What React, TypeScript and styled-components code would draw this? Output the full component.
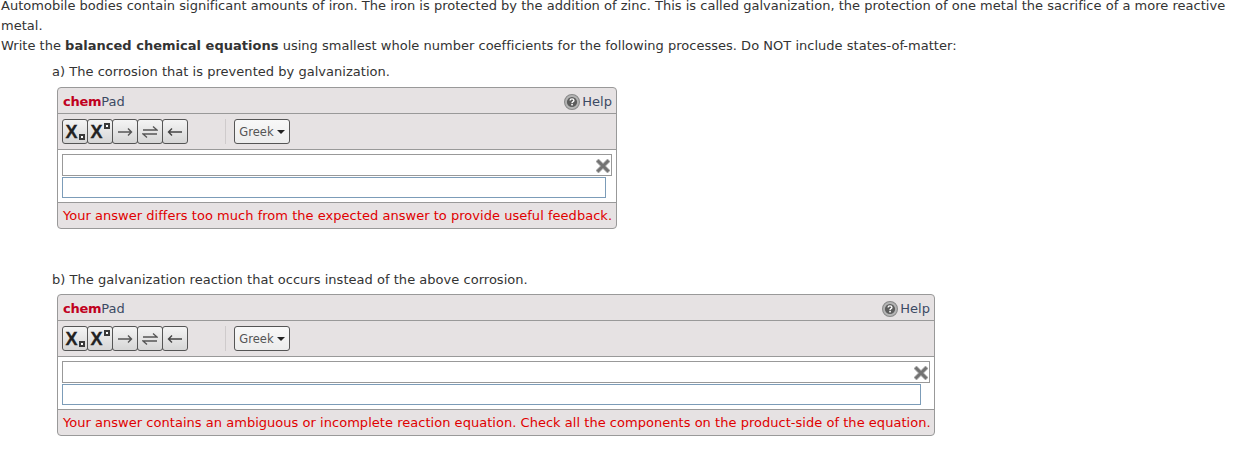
import React from 'react';
import styled, { createGlobalStyle } from 'styled-components';

const GlobalStyle = createGlobalStyle`
  html, body {
    margin: 0;
    padding: 0;
    background: #ffffff;
  }
  body {
    font-family: "DejaVu Sans", Verdana, sans-serif;
    font-size: 13px;
    letter-spacing: 0.03px;
    color: #333333;
    overflow: hidden;
  }
`;

const Page = styled.div`
  margin-top: -4px;
  padding-left: 1px;
  width: 1232px;
`;

const Intro = styled.div`
  line-height: 20px;
  width: 1231px;
  letter-spacing: 0.018px;
`;

const Part = styled.div<{ $gap: number }>`
  margin-left: 56px;
  margin-bottom: ${(p) => p.$gap}px;
`;

const Prompt = styled.div<{ $after: number }>`
  line-height: 20px;
  margin: 6px 0 ${(p) => p.$after}px -5px;
`;

const Panel = styled.div<{ $width: number }>`
  width: ${(p) => p.$width}px;
  border: 1px solid #999999;
  border-radius: 4px;
  background: #e6e2e3;
  box-sizing: border-box;
  overflow: hidden;
`;

const TitleBar = styled.div`
  height: 23px;
  display: flex;
  align-items: center;
  justify-content: space-between;
  padding: 2px 4px 0 5px;
  border-bottom: 1px solid #999999;
`;

const Logo = styled.div`
  font-size: 13px;
  color: #3c4a63;
  b {
    color: #c00020;
    letter-spacing: -0.25px;
  }
`;

const HelpLink = styled.div`
  display: flex;
  align-items: center;
  gap: 2px;
  color: #3c4a63;
`;

const Toolbar = styled.div`
  height: 35px;
  display: flex;
  align-items: center;
  padding: 0 0 0 4px;
  border-bottom: 1px solid #999999;
`;

const ToolGroup = styled.div`
  display: flex;
`;

const ToolButton = styled.div`
  width: 26px;
  height: 25px;
  margin-right: -1px;
  box-sizing: border-box;
  border: 1px solid #555555;
  border-radius: 3px;
  background: linear-gradient(#f4f4f4, #d6d6d6);
  display: flex;
  align-items: center;
  justify-content: center;
`;

const ScriptLetter = styled.span`
  font-family: "Liberation Sans", Arial, sans-serif;
  font-weight: 700;
  font-size: 18px;
  line-height: 1;
  letter-spacing: 0;
  color: #222222;
  -webkit-text-stroke: 0.3px #222222;
`;

const ScriptSlot = styled.span<{ $raised?: boolean }>`
  width: 6px;
  height: 6px;
  box-sizing: border-box;
  margin-left: 1px;
  border: 2px solid #3a3a3a;
  background: #ffffff;
  align-self: ${(p) => (p.$raised ? 'flex-start' : 'flex-end')};
  margin-top: ${(p) => (p.$raised ? 3 : 0)}px;
  margin-bottom: ${(p) => (p.$raised ? 0 : 3)}px;
`;

const Separator = styled.div`
  width: 1px;
  height: 25px;
  background: #cfcbcc;
  margin: 0 8px 0 38px;
`;

const GreekButton = styled.div`
  width: 56px;
  height: 25px;
  box-sizing: border-box;
  border: 1px solid #555555;
  border-radius: 3px;
  background: linear-gradient(#f8f8f8, #ececec);
  display: flex;
  align-items: center;
  justify-content: center;
  gap: 3px;
  font-size: 11.5px;
  color: #555555;
`;

const Caret = styled.span`
  width: 0;
  height: 0;
  border-left: 4px solid transparent;
  border-right: 4px solid transparent;
  border-top: 4px solid #222222;
`;

const Body = styled.div`
  background: #ffffff;
  height: 53px;
  box-sizing: border-box;
  padding: 4px 4px 0;
  border-bottom: 1px solid #999999;
  display: flex;
  flex-direction: column;
  gap: 1px;
`;

const EntryRow = styled.div`
  height: 22px;
  box-sizing: border-box;
  border: 1px solid #999999;
  background: #ffffff;
  display: flex;
  align-items: flex-end;
  justify-content: flex-end;
  padding: 0 1px 2px 0;
`;

const ResultRow = styled.div<{ $inset: number }>`
  height: 21px;
  box-sizing: border-box;
  border: 1px solid #7c9cb8;
  background: #ffffff;
  margin-right: ${(p) => p.$inset}px;
`;

const Feedback = styled.div`
  height: 25px;
  line-height: 25px;
  padding-left: 5px;
  color: #e00000;
  white-space: nowrap;
`;

const HelpIcon = () => (
  <svg width="16" height="16" viewBox="0 0 15 15">
    <circle cx="7.5" cy="7.5" r="7" fill="#b4b4b4" stroke="#8a8a8a" />
    <circle cx="7.5" cy="7.5" r="4.8" fill="#5c5c5c" />
    <path d="M5.7 6 C5.7 4.1 9.3 4.1 9.3 6 C9.3 7.2 7.5 7.1 7.5 8.4" fill="none" stroke="#ffffff" strokeWidth="1.3" />
    <rect x="6.8" y="9.2" width="1.5" height="1.5" fill="#ffffff" />
  </svg>
);

const ClearIcon = () => (
  <svg width="14" height="14" viewBox="0 0 14 14">
    <path d="M2.5 2.5 L11.5 11.5 M11.5 2.5 L2.5 11.5" stroke="#a8a8a8" strokeWidth="4.2" strokeLinecap="square" />
    <path d="M2.5 2.5 L11.5 11.5 M11.5 2.5 L2.5 11.5" stroke="#737373" strokeWidth="2.6" strokeLinecap="square" />
  </svg>
);

const RightArrow = () => (
  <svg width="16" height="12" viewBox="0 0 16 12">
    <path d="M1 6 H14.5 M11 2.5 L14.5 6 L11 9.5" fill="none" stroke="#555555" strokeWidth="1.4" />
  </svg>
);

const EquilibriumArrow = () => (
  <svg width="16" height="14" viewBox="0 0 16 14">
    <path d="M1 5 H15 L11 1.5" fill="none" stroke="#555555" strokeWidth="1.3" />
    <path d="M15 9 H1 L5 12.5" fill="none" stroke="#555555" strokeWidth="1.3" />
  </svg>
);

const LeftArrow = () => (
  <svg width="16" height="12" viewBox="0 0 16 12">
    <path d="M15 6 H1.5 M5 2.5 L1.5 6 L5 9.5" fill="none" stroke="#444444" strokeWidth="1.4" />
  </svg>
);

type ChemPadProps = {
  width: number;
  inset: number;
  message: string;
};

const ChemPad = ({ width, inset, message }: ChemPadProps) => (
  <Panel $width={width}>
    <TitleBar>
      <Logo>
        <b>chem</b>Pad
      </Logo>
      <HelpLink>
        <HelpIcon />
        Help
      </HelpLink>
    </TitleBar>
    <Toolbar>
      <ToolGroup>
        <ToolButton>
          <ScriptLetter>X</ScriptLetter>
          <ScriptSlot />
        </ToolButton>
        <ToolButton>
          <ScriptLetter>X</ScriptLetter>
          <ScriptSlot $raised />
        </ToolButton>
        <ToolButton><RightArrow /></ToolButton>
        <ToolButton><EquilibriumArrow /></ToolButton>
        <ToolButton><LeftArrow /></ToolButton>
      </ToolGroup>
      <Separator />
      <GreekButton>
        Greek
        <Caret />
      </GreekButton>
    </Toolbar>
    <Body>
      <EntryRow><ClearIcon /></EntryRow>
      <ResultRow $inset={inset} />
    </Body>
    <Feedback>{message}</Feedback>
  </Panel>
);

export default function App() {
  return (
    <Page>
      <GlobalStyle />
      <Intro>
        Automobile bodies contain significant amounts of iron. The iron is protected by the addition of zinc. This is called galvanization, the protection of one metal the sacrifice of a more reactive metal.
        <br />
        Write the <b>balanced chemical equations</b> using smallest whole number coefficients for the following processes. Do NOT include states-of-matter:
      </Intro>
      <Part $gap={41}>
        <Prompt $after={5}>a) The corrosion that is prevented by galvanization.</Prompt>
        <ChemPad width={560} inset={6} message="Your answer differs too much from the expected answer to provide useful feedback." />
      </Part>
      <Part $gap={0}>
        <Prompt $after={4}>b) The galvanization reaction that occurs instead of the above corrosion.</Prompt>
        <ChemPad width={878} inset={9} message="Your answer contains an ambiguous or incomplete reaction equation. Check all the components on the product-side of the equation." />
      </Part>
    </Page>
  );
}
